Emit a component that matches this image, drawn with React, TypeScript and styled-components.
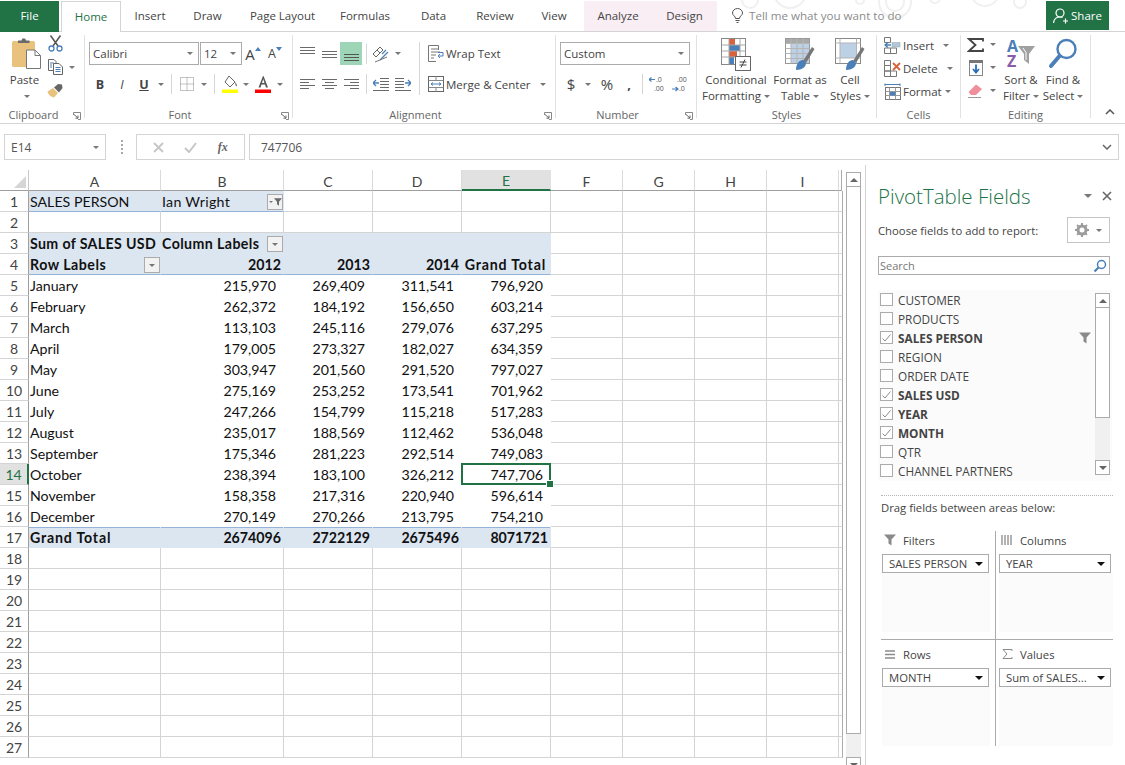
import React from 'react';
import styled, { createGlobalStyle } from 'styled-components';

const UI = `'Open Sans', 'Noto Sans', 'Liberation Sans', sans-serif`;
const SHEET = `Lato, 'Noto Sans', 'Liberation Sans', sans-serif`;
const GREEN = '#217346';
const BLUE = '#4a7fb8';

const GlobalStyle = createGlobalStyle`
  html, body {
    margin: 0;
    padding: 0;
    background: #fff;
    overflow: hidden;
  }
  * {
    box-sizing: border-box;
  }
`;

const Window = styled.div`
  width: 1125px;
  height: 765px;
  overflow: hidden;
  display: flex;
  flex-direction: column;
  font-family: ${UI};
  font-size: 11.5px;
  color: #444;
  background: #fff;
`;

/* Tabs */
const TabBar = styled.div`
  position: relative;
  isolation: isolate;
  height: 32px;
  flex: none;
  display: flex;
  align-items: stretch;
  padding-top: 1px;
  border-bottom: 1px solid #d4d4d4;
`;

const FileTab = styled.div`
  width: 59px;
  margin-right: 2px;
  margin-bottom: -1px;
  padding-bottom: 2px;
  background: ${GREEN};
  color: #fff;
  display: flex;
  align-items: center;
  justify-content: center;
`;

const Tab = styled.div<{ $w: number; $active?: boolean; $ctx?: boolean }>`
  width: ${(p) => p.$w}px;
  padding-bottom: 2px;
  display: flex;
  align-items: center;
  justify-content: center;
  white-space: nowrap;
  background: ${(p) => (p.$ctx ? '#f9eef4' : 'transparent')};
  color: ${(p) => (p.$active ? GREEN : '#444')};
  ${(p) =>
    p.$active &&
    `background: #fff; border: 1px solid #d4d4d4; border-bottom: 0; margin-bottom: -1px; position: relative; z-index: 1;`}
`;

const TellMe = styled.div`
  display: flex;
  align-items: center;
  gap: 6px;
  margin-left: 15px;
  width: 314px;
  padding-bottom: 2px;
  color: #8c8c8c;
  font-size: 11.6px;
  white-space: nowrap;
`;

const ShareButton = styled.div`
  width: 63px;
  margin-bottom: 1px;
  background: ${GREEN};
  color: #fff;
  display: flex;
  align-items: center;
  justify-content: center;
  gap: 3px;
`;

const Swirl = styled.svg`
  position: absolute;
  left: 730px;
  top: 0;
  z-index: -1;
  pointer-events: none;
`;

/* Ribbon */
const Ribbon = styled.div`
  height: 92px;
  flex: none;
  display: flex;
  padding-top: 3px;
  border-bottom: 1px solid #d4d4d4;
`;

const Group = styled.div<{ $w: number }>`
  width: ${(p) => p.$w}px;
  height: 83px;
  flex: none;
  display: flex;
  flex-direction: column;
  border-right: 1px solid #e1e1e1;
`;

const GroupBody = styled.div<{ $pl?: number; $pt?: number; $row?: boolean }>`
  height: 72px;
  padding-left: ${(p) => p.$pl ?? 0}px;
  padding-top: ${(p) => p.$pt ?? 0}px;
  display: flex;
  flex-direction: ${(p) => (p.$row ? 'row' : 'column')};
`;

const GroupLabel = styled.div<{ $launcher?: boolean }>`
  position: relative;
  height: 16px;
  margin-bottom: -5px;
  padding-right: ${(p) => (p.$launcher ? 17 : 0)}px;
  line-height: 16px;
  text-align: center;
  font-size: 11px;
  color: #666;
`;

const Launcher = styled.svg`
  position: absolute;
  right: 3px;
  top: 5px;
`;

const ToolRow = styled.div<{ $h?: number; $mt?: number }>`
  display: flex;
  align-items: center;
  height: ${(p) => p.$h ?? 22}px;
  margin-top: ${(p) => p.$mt ?? 0}px;
  white-space: nowrap;
`;

const Column = styled.div<{ $w?: number; $ml?: number }>`
  display: flex;
  flex-direction: column;
  flex: none;
  margin-left: ${(p) => p.$ml ?? 0}px;
  ${(p) => p.$w && `width: ${p.$w}px;`}
`;

const Btn = styled.div<{ $w: number; $bg?: string; $bold?: boolean; $size?: number; $italic?: boolean; $under?: boolean }>`
  width: ${(p) => p.$w}px;
  height: 100%;
  flex: none;
  display: flex;
  align-items: center;
  justify-content: center;
  background: ${(p) => p.$bg ?? 'transparent'};
  font-weight: ${(p) => (p.$bold ? 700 : 400)};
  font-style: ${(p) => (p.$italic ? 'italic' : 'normal')};
  text-decoration: ${(p) => (p.$under ? 'underline' : 'none')};
  font-size: ${(p) => p.$size ?? 12}px;
`;

const Caret = styled.span<{ $dark?: boolean; $size?: number; $ml?: number }>`
  display: inline-block;
  flex: none;
  width: 0;
  height: 0;
  margin-left: ${(p) => p.$ml ?? 0}px;
  border-left: ${(p) => p.$size ?? 3}px solid transparent;
  border-right: ${(p) => p.$size ?? 3}px solid transparent;
  border-top: ${(p) => p.$size ?? 3}px solid ${(p) => (p.$dark ? '#111' : '#777')};
`;

const VSep = styled.div<{ $w: number; $h?: number }>`
  width: ${(p) => p.$w}px;
  height: ${(p) => p.$h ?? 20}px;
  flex: none;
  position: relative;
  &::after {
    content: '';
    position: absolute;
    left: 50%;
    top: 0;
    bottom: 0;
    width: 1px;
    background: #d6d6d6;
  }
`;

const ComboBox = styled.div<{ $w: number; $mr?: number }>`
  width: ${(p) => p.$w}px;
  height: 23px;
  margin-right: ${(p) => p.$mr ?? 0}px;
  flex: none;
  border: 1px solid #ababab;
  background: #fff;
  display: flex;
  align-items: center;
  justify-content: space-between;
  padding: 0 5px 0 3px;
`;

const LargeButton = styled.div<{ $w: number }>`
  width: ${(p) => p.$w}px;
  flex: none;
  display: flex;
  flex-direction: column;
  align-items: center;
  line-height: 16px;
  white-space: nowrap;
`;

const LargeIcon = styled.div<{ $h?: number }>`
  height: ${(p) => p.$h ?? 36}px;
  display: flex;
  align-items: center;
  justify-content: center;
`;

const TextLine = styled.div`
  display: flex;
  align-items: center;
  gap: 3px;
  height: 16px;
`;

const ToolText = styled.span<{ $ml?: number; $mr?: number }>`
  margin-left: ${(p) => p.$ml ?? 3}px;
  margin-right: ${(p) => p.$mr ?? 0}px;
`;

const SortLetters = styled.div`
  display: flex;
  flex-direction: column;
  font-size: 16px;
  font-weight: 700;
  line-height: 15px;
`;

const SortLetter = styled.span<{ $c: string }>`
  color: ${(p) => p.$c};
`;

const Collapse = styled.div`
  flex: 1;
  display: flex;
  align-items: flex-end;
  justify-content: flex-end;
  padding: 0 10px 3px 0;
  height: 83px;
`;

/* Formula bar */
const FormulaBar = styled.div`
  height: 41px;
  flex: none;
  display: flex;
  align-items: center;
  padding: 5px 6px 0 4px;
  color: #555;
  font-size: 12px;
`;

const FormulaBox = styled.div<{ $w?: number; $ml?: number; $around?: boolean }>`
  ${(p) => (p.$w ? `width: ${p.$w}px; flex: none;` : 'flex: 1;')}
  margin-left: ${(p) => p.$ml ?? 0}px;
  height: 26px;
  border: 1px solid #d4d4d4;
  display: flex;
  align-items: center;
  justify-content: ${(p) => (p.$around ? 'space-around' : 'space-between')};
  padding: 0 6px;
  background: #fff;
`;

const Grip = styled.div`
  width: 3px;
  height: 14px;
  margin-left: 15px;
  margin-right: 12px;
  border-left: 2px dotted #a8a8a8;
`;

const FxMark = styled.span`
  font-family: 'Liberation Serif', serif;
  font-style: italic;
  font-weight: 700;
  color: #666;
`;

const FormulaValue = styled.span`
  margin-left: 5px;
`;

/* Sheet */
const Main = styled.div`
  flex: 1;
  min-height: 0;
  display: flex;
`;

const SheetArea = styled.div`
  width: 865px;
  flex: none;
  display: flex;
  padding-top: 5px;
  overflow: hidden;
`;

const Grid = styled.div`
  display: grid;
  width: 842px;
  height: 588px;
  grid-template-columns: 29px 132px 123px 89px 89px 89px 72px 72px 72px 72px 3px;
  grid-auto-rows: 21px;
  font-family: ${SHEET};
  font-size: 14.2px;
  color: #111;
`;

const Corner = styled.div`
  border-bottom: 1px solid #9f9f9f;
  border-right: 1px solid #c8c8c8;
  position: relative;
  &::after {
    content: '';
    position: absolute;
    right: 2px;
    bottom: 2px;
    border-style: solid;
    border-width: 0 0 12px 12px;
    border-color: transparent transparent #d6d6d6 transparent;
  }
`;

const ColHead = styled.div<{ $sel?: boolean; $end?: boolean }>`
  display: flex;
  align-items: center;
  justify-content: center;
  padding-top: 2px;
  color: ${(p) => (p.$sel ? GREEN : '#444')};
  background: ${(p) => (p.$sel ? '#e1e1e1' : '#fff')};
  font-size: 14px;
  border-right: 1px solid ${(p) => (p.$sel ? '#e1e1e1' : p.$end ? '#ababab' : '#dadada')};
  border-bottom: ${(p) => (p.$sel ? `2px solid ${GREEN}` : '1px solid #9f9f9f')};
`;

const RowHead = styled.div<{ $sel?: boolean }>`
  display: flex;
  align-items: center;
  justify-content: center;
  color: ${(p) => (p.$sel ? GREEN : '#444')};
  background: ${(p) => (p.$sel ? '#e1e1e1' : '#fff')};
  font-size: 14px;
  border-bottom: 1px solid #d4d4d4;
  border-right: ${(p) => (p.$sel ? `2px solid ${GREEN}` : '1px solid #9f9f9f')};
`;

const Cell = styled.div<{
  $shade?: boolean;
  $plain?: boolean;
  $right?: boolean;
  $bold?: boolean;
  $pr?: number;
  $track?: number;
  $line?: 'top' | 'bottom';
  $sel?: boolean;
  $end?: boolean;
}>`
  position: relative;
  display: flex;
  align-items: center;
  white-space: nowrap;
  padding: 0 ${(p) => p.$pr ?? 2}px 0 1px;
  justify-content: ${(p) => (p.$right ? 'flex-end' : 'flex-start')};
  font-weight: ${(p) => (p.$bold ? 700 : 400)};
  letter-spacing: ${(p) => p.$track ?? 0}px;
  background: ${(p) => (p.$shade ? '#dce6f1' : '#fff')};
  border-right: 1px solid
    ${(p) => (p.$end ? '#ababab' : p.$shade ? '#dce6f1' : p.$plain || p.$sel ? '#fff' : '#d4d4d4')};
  border-bottom: 1px solid
    ${(p) =>
      p.$line === 'bottom' ? '#95b3d7' : p.$shade ? '#dce6f1' : p.$plain ? '#fff' : '#d4d4d4'};
  ${(p) => p.$line === 'top' && 'box-shadow: inset 0 1px 0 #95b3d7;'}
  ${(p) =>
    p.$sel &&
    `&::after {
      content: '';
      position: absolute;
      left: -1px;
      top: -1px;
      right: -1px;
      bottom: -1px;
      border: 2px solid ${GREEN};
    }
    &::before {
      content: '';
      position: absolute;
      right: -4px;
      bottom: -4px;
      width: 6px;
      height: 6px;
      background: ${GREEN};
      border: 1px solid #fff;
      z-index: 1;
    }`}
`;

const FilterBtn = styled.div`
  position: absolute;
  right: 0;
  top: 3px;
  width: 16px;
  height: 16px;
  background: #f2f2f2;
  border: 1px solid #ababab;
  display: flex;
  align-items: center;
  justify-content: center;
  gap: 1px;
`;

const VScroll = styled.div`
  width: 23px;
  flex: none;
  padding: 2px 0 0 4px;
  display: flex;
  flex-direction: column;
`;

const ScrollBtn = styled.div`
  height: 15px;
  flex: none;
  width: 15px;
  border: 1px solid #ababab;
  background: #fff;
  display: flex;
  align-items: center;
  justify-content: center;
`;

const ScrollThumb = styled.div<{ $h: number }>`
  height: ${(p) => p.$h}px;
  width: 15px;
  flex: none;
  border: 1px solid #ababab;
  border-top: 0;
  background: #fff;
`;

const ScrollTrack = styled.div<{ $h: number }>`
  height: ${(p) => p.$h}px;
  width: 15px;
  flex: none;
  background: #f0f0f0;
`;

const UpArrow = styled.span`
  width: 0;
  height: 0;
  border-left: 4px solid transparent;
  border-right: 4px solid transparent;
  border-bottom: 4px solid #666;
`;

const DownArrow = styled.span`
  width: 0;
  height: 0;
  border-left: 4px solid transparent;
  border-right: 4px solid transparent;
  border-top: 4px solid #666;
`;

/* PivotTable pane */
const Pane = styled.div`
  flex: 0 0 260px;
  min-width: 0;
  border-left: 1px solid #d4d4d4;
  padding: 15px 15px 0 12px;
  display: flex;
  flex-direction: column;
  font-size: 11.3px;
  color: #444;
`;

const PaneHead = styled.div`
  display: flex;
  align-items: center;
  justify-content: space-between;
  height: 32px;
`;

const PaneTitle = styled.div`
  font-size: 20.5px;
  font-weight: 300;
  color: ${GREEN};
  white-space: nowrap;
`;

const PaneActions = styled.div`
  display: flex;
  align-items: center;
  gap: 10px;
  margin-right: -2px;
`;

const ChooseRow = styled.div`
  display: flex;
  align-items: center;
  justify-content: space-between;
  height: 26px;
  margin-top: 5px;
`;

const GearBox = styled.div`
  width: 43px;
  height: 26px;
  border: 1px solid #c6c6c6;
  display: flex;
  align-items: center;
  justify-content: center;
  gap: 7px;
`;

const SearchBox = styled.div`
  height: 19px;
  margin-top: 13px;
  border: 1px solid #ababab;
  display: flex;
  align-items: center;
  justify-content: space-between;
  padding: 0 2px 0 1px;
  color: #777;
  font-size: 11px;
`;

const FieldList = styled.div`
  display: flex;
  height: 191px;
  margin-top: 15px;
  margin-right: -2px;
  background: #fbfbfb;
`;

const Fields = styled.div`
  flex: 1;
  padding: 0 4px 0 2px;
  font-size: 11.8px;
`;

const FieldRow = styled.div<{ $on?: boolean }>`
  height: 19px;
  display: flex;
  align-items: center;
  gap: 5px;
  font-weight: ${(p) => (p.$on ? 700 : 400)};
  white-space: nowrap;
`;

const CheckBox = styled.span`
  width: 13px;
  height: 13px;
  flex: none;
  background: #fff;
  border: 1px solid #ababab;
  display: flex;
  align-items: center;
  justify-content: center;
`;

const FieldFilter = styled.span`
  margin-left: auto;
  display: flex;
`;

const ListScroll = styled.div`
  width: 15px;
  flex: none;
  margin-right: 2px;
  padding-top: 3px;
  display: flex;
  flex-direction: column;
`;

const DottedRule = styled.div`
  margin: 14px -3px 0 3px;
  border-top: 1px dotted #b5b5b5;
`;

const DragHint = styled.div`
  margin: 3px 0 0 3px;
  height: 17px;
  line-height: 17px;
`;

const Areas = styled.div`
  display: grid;
  grid-template-columns: 115px 117px;
  grid-template-rows: 109px 106px;
  margin: 15px 0 0 3px;
`;

const Area = styled.div<{ $left?: boolean; $top?: boolean }>`
  padding: ${(p) => (p.$top ? 0 : 5)}px 0 ${(p) => (p.$top ? 7 : 0)}px ${(p) => (p.$left ? 1 : 3)}px;
  ${(p) => p.$left && 'border-right: 1px solid #ababab;'}
  ${(p) => p.$top && 'border-bottom: 1px solid #ababab;'}
  display: flex;
  flex-direction: column;
`;

const AreaHead = styled.div`
  height: 18px;
  display: flex;
  align-items: center;
  gap: 7px;
  padding-left: 2px;
`;

const AreaGlyph = styled.span`
  width: 12px;
  display: flex;
  justify-content: center;
  flex: none;
`;

const AreaBox = styled.div<{ $w: number }>`
  flex: none;
  width: ${(p) => p.$w}px;
  height: 19px;
  margin-top: 5px;
  border: 1px solid #ababab;
  background: #fff;
  display: flex;
  align-items: center;
  justify-content: space-between;
  padding: 0 5px 0 6px;
  white-space: nowrap;
`;

const AreaFill = styled.div<{ $w: number }>`
  flex: 1;
  width: ${(p) => p.$w}px;
  background: #fbfbfb;
`;

/* Icons */
const LauncherIcon = () => (
  <Launcher width="8" height="8" viewBox="0 0 8 8">
    <path d="M.5 3V.5H7.5V7.5H5" fill="none" stroke="#888" />
    <path d="M1 2.5L5 6M5 3.5V6.2H2.5" fill="none" stroke="#666" />
  </Launcher>
);

const PasteIcon = () => (
  <svg width="30" height="33" viewBox="0 0 30 33">
    <rect x="0" y="4" width="23" height="26" rx="1.5" fill="#e9c37e" />
    <path d="M6 6V3.5H9.5C10 .5 13.5 .5 14 3.5H17.5V6Z" fill="#6a6a6a" />
    <path d="M14.5 13H23L28.5 18.5V31.5H14.5Z" fill="#fff" stroke="#777" />
    <path d="M23 13V18.5H28.5" fill="none" stroke="#777" />
  </svg>
);

const ScissorsIcon = () => (
  <svg width="15" height="17" viewBox="0 0 15 17">
    <path d="M2.5 .5L10 11M12.5 .5L5 11" fill="none" stroke="#555" strokeWidth="1.5" />
    <circle cx="3.5" cy="13.5" r="2.5" fill="none" stroke={BLUE} strokeWidth="1.3" />
    <circle cx="11.5" cy="13.5" r="2.5" fill="none" stroke={BLUE} strokeWidth="1.3" />
  </svg>
);

const CopyIcon = () => (
  <svg width="15" height="16" viewBox="0 0 15 16">
    <path d="M.5 .5H6L8 2.5V11.5H.5Z" fill="#fff" stroke="#666" />
    <path d="M5.5 4.5H11L14.5 8V15.5H5.5Z" fill="#fff" stroke="#666" />
    <path d="M2 4H6M2 6H4M2 8H4M7.5 8.5H12.5M7.5 10.5H12.5M7.5 12.5H12.5" stroke={BLUE} />
  </svg>
);

const BrushIcon = () => (
  <svg width="17" height="15" viewBox="0 0 17 15">
    <path d="M6 5L11 10L7 14.5C4 14 1 11.5 .5 8.5Z" fill="#e9c37e" />
    <path d="M7 4.5L11 1L15 1.5L15.5 5L12 9.5Z" fill="#666" />
  </svg>
);

const GrowA = ({ up }: { up?: boolean }) => (
  <Btn $w={22} $size={up ? 15 : 12.5}>
    A
    <svg width="6" height="4" viewBox="0 0 6 4" style={{ marginBottom: 10 }}>
      <path d={up ? 'M0 4L3 0L6 4Z' : 'M0 0L3 4L6 0Z'} fill={BLUE} />
    </svg>
  </Btn>
);

const BordersIcon = () => (
  <svg width="14" height="14" viewBox="0 0 14 14">
    <path d="M.5 .5H13.5V13.5H.5ZM.5 7H13.5M7 .5V13.5" fill="none" stroke="#888" strokeDasharray="1 1" />
  </svg>
);

const FillIcon = () => (
  <svg width="16" height="18" viewBox="0 0 16 18">
    <path d="M7 1L13 7L8 12L3 7Z" fill="#fff" stroke="#666" />
    <path d="M13 7C15 9 15.5 11 14.5 11.5C13.5 11 13 9 13 7Z" fill="#777" />
    <rect x="0" y="14.5" width="16" height="3.5" fill="#ffff00" />
  </svg>
);

const FontColorIcon = () => (
  <svg width="16" height="18" viewBox="0 0 16 18">
    <path d="M8 1H8.5L13 12.5H11L10 9.5H6.5L5.5 12.5H3.5ZM7 8H9.5L8.2 4Z" fill="#555" />
    <rect x="0" y="14.5" width="16" height="3.5" fill="#ff0000" />
  </svg>
);

const Lines = ({ rows, w = 15 }: { rows: number[]; w?: number }) => (
  <svg width={w} height="16" viewBox={`0 0 ${w} 16`}>
    {rows.map((y) => (
      <path key={y} d={`M0 ${y + 0.5}H${w}`} stroke="#6a6a6a" />
    ))}
  </svg>
);

const AlignLeft = () => (
  <svg width="15" height="11" viewBox="0 0 15 11">
    <path d="M0 .5H15M0 3.5H9M0 6.5H15M0 9.5H9" stroke="#6a6a6a" />
  </svg>
);

const AlignCenter = () => (
  <svg width="15" height="11" viewBox="0 0 15 11">
    <path d="M0 .5H15M3 3.5H12M0 6.5H15M3 9.5H12" stroke="#6a6a6a" />
  </svg>
);

const AlignRight = () => (
  <svg width="15" height="11" viewBox="0 0 15 11">
    <path d="M0 .5H15M6 3.5H15M0 6.5H15M6 9.5H15" stroke="#6a6a6a" />
  </svg>
);

const OrientationIcon = () => (
  <svg width="18" height="18" viewBox="0 0 18 18">
    <path d="M1 9L8 2L11 5L4 12ZM5 5L8 8" fill="none" stroke="#666" />
    <path d="M10 9L14 5M8 15L16 7" stroke={BLUE} strokeWidth="1.2" />
    <path d="M3 17L15 12" stroke="#777" />
  </svg>
);

const IndentIcon = ({ flip }: { flip?: boolean }) => (
  <svg width="16" height="14" viewBox="0 0 16 14" style={{ transform: flip ? 'scaleX(-1)' : undefined }}>
    <path d="M7 1.5H16M7 4.5H16M7 7.5H16M7 10.5H16M0 13.5H16" stroke="#6a6a6a" />
    <path d="M0 6H6M3 3L0 6L3 9" fill="none" stroke={BLUE} strokeWidth="1.3" />
  </svg>
);

const WrapIcon = () => (
  <svg width="16" height="17" viewBox="0 0 16 17">
    <path d="M.5 .5H10.5V5M.5 .5V16.5H8" fill="none" stroke="#777" />
    <path d="M3 4H10M3 7H12M3 10H8M3 13H6" stroke="#777" />
    <path d="M10 7.5H15V11H10M12 9L10 11L12 13" fill="none" stroke={BLUE} />
  </svg>
);

const MergeIcon = () => (
  <svg width="16" height="16" viewBox="0 0 16 16">
    <rect x=".5" y=".5" width="15" height="15" fill="#fff" stroke="#666" />
    <path d="M.5 4.5H15.5M.5 11.5H15.5M8 .5V4M8 12V15.5" stroke="#888" />
    <path d="M3 8H13M3 8L5 6.5M3 8L5 9.5M13 8L11 6.5M13 8L11 9.5" fill="none" stroke={BLUE} />
  </svg>
);

const DecimalIcon = ({ more }: { more?: boolean }) => (
  <svg width="17" height="20" viewBox="0 0 17 20">
    <text x={more ? 7 : 5} y="7.6" fontSize="7" fontFamily={UI} fill="#555">
      {more ? '.0' : '.00'}
    </text>
    <text x={more ? 5 : 7} y="17.2" fontSize="7" fontFamily={UI} fill="#555">
      {more ? '.00' : '.0'}
    </text>
    <path
      d={more ? 'M0 5.500H6M2.5 3.500L0 5.500L2.5 7.500' : 'M0 15H6M3.5 13L6 15L3.5 17'}
      fill="none"
      stroke={BLUE}
      strokeWidth="1.2"
    />
  </svg>
);

const ConditionalIcon = () => (
  <svg width="30" height="33" viewBox="0 0 30 33">
    <rect x=".5" y=".5" width="24" height="26" fill="#fff" stroke="#888" />
    <rect x="8" y="1" width="6" height="6" fill="#d9623a" />
    <rect x="8" y="7" width="11" height="6" fill="#4a7fb8" />
    <rect x="8" y="13" width="8" height="6" fill="#d9623a" />
    <rect x="8" y="19" width="5" height="7" fill="#4a7fb8" />
    <path d="M.5 7H24.5M.5 13H24.5M.5 19H24.5M8 .5V26.5M19 .5V26.5" stroke="#a8a8a8" />
    <rect x="14.5" y="18.5" width="15" height="14" fill="#fff" stroke="#666" />
    <path d="M18.5 24H25.5M18.5 27H25.5M24 21.5L20 29.5" fill="none" stroke="#444" />
  </svg>
);

const FormatTableIcon = () => (
  <svg width="30" height="33" viewBox="0 0 30 33">
    <rect x=".5" y=".5" width="24" height="25" fill="#fff" stroke="#999" />
    <rect x="1" y="1" width="23" height="4" fill="#a8a8a8" />
    <rect x="6" y="6" width="18" height="19" fill="#bcd0e6" />
    <path d="M.5 5.5H24.5M.5 10.5H24.5M.5 15.5H24.5M.5 20.5H24.5M6 .5V25.5M12 .5V25.5M18 .5V25.5" stroke="#b5b5b5" />
    <path d="M18 23L27 9L29.5 11L21 25Z" fill="#777" />
    <path d="M11 32C11 26 14 22 18 22L21 25C21 29 17 32 11 32Z" fill={BLUE} />
  </svg>
);

const CellStylesIcon = () => (
  <svg width="30" height="33" viewBox="0 0 30 33">
    <rect x=".5" y=".5" width="25" height="25" fill="#fff" stroke="#888" />
    <rect x="5" y="5" width="17" height="15" fill="#bcd0e6" />
    <path d="M5 .5V25.5M.5 5H25.5M.5 20H25.5M21.5 .5V25.5" stroke="#b5b5b5" />
    <path d="M18 23L27 9L29.5 11L21 25Z" fill="#777" />
    <path d="M11 32C11 26 14 22 18 22L21 25C21 29 17 32 11 32Z" fill={BLUE} />
  </svg>
);

const InsertIcon = () => (
  <svg width="17" height="17" viewBox="0 0 17 17">
    <path d="M.5 .5H6.5V5.5H.5ZM.5 11H6.5V16.5H.5ZM6.5 11H12.5V16.5H6.5Z" fill="#fff" stroke="#777" />
    <rect x="8" y="5.5" width="8" height="4.5" fill="#b5c6da" stroke="#8aa" strokeWidth=".5" />
    <path d="M1 8H7M4 5.5L1 8L4 10.5" fill="none" stroke={BLUE} strokeWidth="1.4" />
  </svg>
);

const DeleteIcon = () => (
  <svg width="17" height="17" viewBox="0 0 17 17">
    <path d="M.5 .5H6.5V5.5H.5ZM.5 5.5H6.5V11H.5ZM.5 11H6.5V16.5H.5ZM6.5 11H12.5V16.5H6.5Z" fill="#fff" stroke="#777" />
    <path d="M9 3L16 10M16 3L9 10" stroke="#d9623a" strokeWidth="1.8" />
  </svg>
);

const FormatIcon = () => (
  <svg width="17" height="17" viewBox="0 0 17 17">
    <rect x="1.5" y="4.5" width="15" height="12" fill="#fff" stroke="#777" />
    <path d="M5.5 4.5V16.5M11.5 4.5V16.5M1.5 8.5H16.5M1.5 12.5H16.5" stroke="#999" />
    <rect x="6" y="9" width="5.5" height="3.5" fill={BLUE} />
    <path d="M1 1.5H16M1 .5V3M16 .5V3" fill="none" stroke={BLUE} />
  </svg>
);

const SigmaIcon = () => (
  <svg width="17" height="14" viewBox="0 0 17 14">
    <path d="M16 3.5V1H2L8.5 7L2 13H16V10.5" fill="none" stroke="#444" strokeWidth="1.8" />
  </svg>
);

const FillDownIcon = () => (
  <svg width="14" height="16" viewBox="0 0 14 16">
    <rect x=".5" y=".5" width="13" height="15" fill="#fff" stroke="#888" />
    <rect x="0" y="0" width="14" height="3" fill="#777" />
    <path d="M7 4.5V12M4 9L7 12.5L10 9" fill="none" stroke="#2a6ebb" strokeWidth="1.8" />
  </svg>
);

const EraserIcon = () => (
  <svg width="15" height="14" viewBox="0 0 15 14">
    <path d="M.5 8L8 .5L14 5L8 11H3Z" fill="#ef8f9c" />
    <path d="M0 13.5H13" stroke="#999" />
  </svg>
);

const FunnelBig = () => (
  <svg width="17" height="19" viewBox="0 0 17 19">
    <path d="M0 1H17L11 9V19L6 15V9Z" fill="#a0a0a0" />
    <path d="M5 3L8 7.5V15" fill="none" stroke="#fff" />
  </svg>
);

const FindIcon = () => (
  <svg width="30" height="32" viewBox="0 0 30 32">
    <circle cx="18.5" cy="11" r="9" fill="#fff" stroke={BLUE} strokeWidth="2.4" />
    <path d="M11.5 18L3 28" stroke={BLUE} strokeWidth="4" strokeLinecap="round" />
  </svg>
);

const FilterFunnel = ({ c = '#8a8a8a', s = 12 }: { c?: string; s?: number }) => (
  <svg width={s} height={s} viewBox="0 0 12 12">
    <path d="M0 .5H12L7.5 5.5V11.5L4.5 9.5V5.5Z" fill={c} />
  </svg>
);

const GearIcon = () => (
  <svg width="14" height="14" viewBox="0 0 14 14">
    <circle cx="7" cy="7" r="4" fill="none" stroke="#9c9c9c" strokeWidth="3" />
    <path d="M7 0V14M0 7H14M2 2L12 12M12 2L2 12" stroke="#9c9c9c" strokeWidth="2" strokeDasharray="2 10" />
  </svg>
);

const Tick = () => (
  <svg width="9" height="8" viewBox="0 0 9 8">
    <path d="M.5 4.5L3 7L8.5 .5" fill="none" stroke="#8a8a8a" />
  </svg>
);

const tabs: { label: string; w: number; ctx?: boolean }[] = [
  { label: 'Insert', w: 58 },
  { label: 'Draw', w: 57 },
  { label: 'Page Layout', w: 93 },
  { label: 'Formulas', w: 72 },
  { label: 'Data', w: 65 },
  { label: 'Review', w: 58 },
  { label: 'View', w: 60 },
  { label: 'Analyze', w: 68, ctx: true },
  { label: 'Design', w: 65, ctx: true },
];

const colLetters = ['A', 'B', 'C', 'D', 'E', 'F', 'G', 'H', 'I'];

const months: [string, string, string, string, string][] = [
  ['January', '215,970', '269,409', '311,541', '796,920'],
  ['February', '262,372', '184,192', '156,650', '603,214'],
  ['March', '113,103', '245,116', '279,076', '637,295'],
  ['April', '179,005', '273,327', '182,027', '634,359'],
  ['May', '303,947', '201,560', '291,520', '797,027'],
  ['June', '275,169', '253,252', '173,541', '701,962'],
  ['July', '247,266', '154,799', '115,218', '517,283'],
  ['August', '235,017', '188,569', '112,462', '536,048'],
  ['September', '175,346', '281,223', '292,514', '749,083'],
  ['October', '238,394', '183,100', '326,212', '747,706'],
  ['November', '158,358', '217,316', '220,940', '596,614'],
  ['December', '270,149', '270,266', '213,795', '754,210'],
];

const fields: { name: string; on?: boolean; filter?: boolean }[] = [
  { name: 'CUSTOMER' },
  { name: 'PRODUCTS' },
  { name: 'SALES PERSON', on: true, filter: true },
  { name: 'REGION' },
  { name: 'ORDER DATE' },
  { name: 'SALES USD', on: true },
  { name: 'YEAR', on: true },
  { name: 'MONTH', on: true },
  { name: 'QTR' },
  { name: 'CHANNEL PARTNERS' },
];

const EmptyCells = ({ from }: { from: number }) => (
  <>
    {Array.from({ length: 9 - from }, (_, i) => (
      <Cell key={i} />
    ))}
    <Cell $end />
  </>
);

const TitleTabs = () => (
  <TabBar>
    <Swirl width="310" height="31" viewBox="0 0 310 31">
      <g fill="none" stroke="#f0f0f0" strokeWidth="2">
        <circle cx="20" cy="0" r="8" />
        <circle cx="60" cy="-8" r="16" />
        <circle cx="130" cy="0" r="4" />
        <circle cx="165" cy="2" r="16" />
        <circle cx="165" cy="2" r="9" />
        <circle cx="205" cy="-2" r="5" />
        <circle cx="255" cy="-8" r="14" />
        <circle cx="290" cy="2" r="6" />
      </g>
    </Swirl>
    <FileTab>File</FileTab>
    <Tab $w={60} $active>
      Home
    </Tab>
    {tabs.map((t) => (
      <Tab key={t.label} $w={t.w} $ctx={t.ctx}>
        {t.label}
      </Tab>
    ))}
    <TellMe>
      <svg width="11" height="15" viewBox="0 0 11 15">
        <path
          d="M3.5 10.5C3.5 8 .5 7.5 .5 5C.5 2.5 2.7 .5 5.5 .5C8.3 .5 10.5 2.5 10.5 5C10.5 7.5 7.5 8 7.5 10.5ZM3.5 12.5H7.5M4.5 14.5H6.5"
          fill="none"
          stroke="#555"
        />
      </svg>
      Tell me what you want to do
    </TellMe>
    <ShareButton>
      <svg width="15" height="16" viewBox="0 0 15 16">
        <circle cx="7" cy="5" r="4" fill="none" stroke="#fff" strokeWidth="1.2" />
        <path d="M.5 15C1 11 3.5 9 7 9C8 9 9 9.2 9.5 9.5M10 13H15M12.5 10.5V15.5" fill="none" stroke="#fff" strokeWidth="1.2" />
      </svg>
      Share
    </ShareButton>
  </TabBar>
);

const RibbonBar = () => (
  <Ribbon>
    <Group $w={85}>
      <GroupBody $row $pl={10}>
        <LargeButton $w={34}>
          <LargeIcon $h={37}>
            <PasteIcon />
          </LargeIcon>
          <ToolText $ml={-5}>Paste</ToolText>
          <TextLine>
            <Caret />
          </TextLine>
        </LargeButton>
        <Column>
          <ToolRow $h={17}>
            <Btn $w={22}>
              <ScissorsIcon />
            </Btn>
          </ToolRow>
          <ToolRow $h={18} $mt={6}>
            <Btn $w={22}>
              <CopyIcon />
            </Btn>
            <Caret $ml={3} />
          </ToolRow>
          <ToolRow $h={16} $mt={6}>
            <Btn $w={22}>
              <BrushIcon />
            </Btn>
          </ToolRow>
        </Column>
      </GroupBody>
      <GroupLabel $launcher>
        Clipboard
        <LauncherIcon />
      </GroupLabel>
    </Group>

    <Group $w={208}>
      <GroupBody $pl={4} $pt={7}>
        <ToolRow $h={23}>
          <ComboBox $w={110} $mr={1}>
            Calibri
            <Caret />
          </ComboBox>
          <ComboBox $w={42}>
            12
            <Caret />
          </ComboBox>
          <GrowA up />
          <GrowA />
        </ToolRow>
        <ToolRow $mt={8}>
          <Btn $w={22} $bold $size={12.5}>
            B
          </Btn>
          <Btn $w={22} $size={12.5} $italic>
            I
          </Btn>
          <Btn $w={22} $bold $size={12.5} $under>
            U
          </Btn>
          <Btn $w={12}>
            <Caret />
          </Btn>
          <VSep $w={8} />
          <Btn $w={24}>
            <BordersIcon />
          </Btn>
          <Btn $w={10}>
            <Caret />
          </Btn>
          <VSep $w={10} />
          <Btn $w={22}>
            <FillIcon />
          </Btn>
          <Btn $w={10}>
            <Caret />
          </Btn>
          <Btn $w={24}>
            <FontColorIcon />
          </Btn>
          <Btn $w={10}>
            <Caret />
          </Btn>
        </ToolRow>
      </GroupBody>
      <GroupLabel $launcher>
        Font
        <LauncherIcon />
      </GroupLabel>
    </Group>

    <Group $w={263}>
      <GroupBody $row $pl={3} $pt={7}>
        <Column>
          <ToolRow $h={23}>
            <Btn $w={22}>
              <Lines rows={[1, 4, 7]} />
            </Btn>
            <Btn $w={22}>
              <Lines rows={[5, 8, 11]} />
            </Btn>
            <Btn $w={22} $bg="#9fd5b7">
              <svg width="15" height="15" viewBox="0 0 15 15">
                <path d="M0 8.5H15M0 11.5H15M0 14.5H15" stroke="#555" />
              </svg>
            </Btn>
            <VSep $w={8} />
            <Btn $w={22}>
              <OrientationIcon />
            </Btn>
            <Btn $w={12}>
              <Caret />
            </Btn>
          </ToolRow>
          <ToolRow $mt={8}>
            <Btn $w={22}>
              <AlignLeft />
            </Btn>
            <Btn $w={22}>
              <AlignCenter />
            </Btn>
            <Btn $w={22}>
              <AlignRight />
            </Btn>
            <VSep $w={8} />
            <Btn $w={22}>
              <IndentIcon />
            </Btn>
            <Btn $w={22}>
              <IndentIcon flip />
            </Btn>
          </ToolRow>
        </Column>
        <VSep $w={10} $h={53} />
        <Column $ml={4}>
          <ToolRow $h={23}>
            <WrapIcon />
            <ToolText $ml={2}>Wrap Text</ToolText>
          </ToolRow>
          <ToolRow $mt={8}>
            <MergeIcon />
            <ToolText $ml={2} $mr={9}>
              Merge &amp; Center
            </ToolText>
            <Caret />
          </ToolRow>
        </Column>
      </GroupBody>
      <GroupLabel $launcher>
        Alignment
        <LauncherIcon />
      </GroupLabel>
    </Group>

    <Group $w={141}>
      <GroupBody $pl={4} $pt={7}>
        <ToolRow $h={23}>
          <ComboBox $w={130}>
            Custom
            <Caret />
          </ComboBox>
        </ToolRow>
        <ToolRow $mt={8}>
          <Btn $w={22} $size={15}>
            $
          </Btn>
          <Btn $w={12}>
            <Caret />
          </Btn>
          <Btn $w={26} $size={15}>
            %
          </Btn>
          <Btn $w={18} $bold $size={13}>
            ,
          </Btn>
          <VSep $w={8} />
          <Btn $w={22}>
            <DecimalIcon more />
          </Btn>
          <Btn $w={24}>
            <DecimalIcon />
          </Btn>
        </ToolRow>
      </GroupBody>
      <GroupLabel $launcher>
        Number
        <LauncherIcon />
      </GroupLabel>
    </Group>

    <Group $w={180}>
      <GroupBody $row $pt={1}>
        <LargeButton $w={78}>
          <LargeIcon>
            <ConditionalIcon />
          </LargeIcon>
          <div>Conditional</div>
          <TextLine>
            Formatting
            <Caret />
          </TextLine>
        </LargeButton>
        <LargeButton $w={50}>
          <LargeIcon>
            <FormatTableIcon />
          </LargeIcon>
          <div>Format as</div>
          <TextLine>
            Table
            <Caret />
          </TextLine>
        </LargeButton>
        <LargeButton $w={50}>
          <LargeIcon>
            <CellStylesIcon />
          </LargeIcon>
          <div>Cell</div>
          <TextLine>
            Styles
            <Caret />
          </TextLine>
        </LargeButton>
      </GroupBody>
      <GroupLabel>Styles</GroupLabel>
    </Group>

    <Group $w={84}>
      <GroupBody $pl={7}>
        <ToolRow $h={23} $mt={-1}>
          <InsertIcon />
          <ToolText $ml={2} $mr={9}>
            Insert
          </ToolText>
          <Caret />
        </ToolRow>
        <ToolRow $h={23}>
          <DeleteIcon />
          <ToolText $ml={2} $mr={9}>
            Delete
          </ToolText>
          <Caret />
        </ToolRow>
        <ToolRow $h={23}>
          <FormatIcon />
          <ToolText $ml={2} $mr={3}>
            Format
          </ToolText>
          <Caret />
        </ToolRow>
      </GroupBody>
      <GroupLabel>Cells</GroupLabel>
    </Group>

    <Group $w={130}>
      <GroupBody $row $pl={6} $pt={1}>
        <Column $w={33}>
          <ToolRow $h={23} $mt={-3}>
            <SigmaIcon />
            <Caret $ml={6} />
          </ToolRow>
          <ToolRow $h={23}>
            <Btn $w={17}>
              <FillDownIcon />
            </Btn>
            <Caret $ml={6} />
          </ToolRow>
          <ToolRow $h={23}>
            <Btn $w={17}>
              <EraserIcon />
            </Btn>
            <Caret $ml={6} />
          </ToolRow>
        </Column>
        <LargeButton $w={42}>
          <LargeIcon>
            <SortLetters>
              <SortLetter $c={BLUE}>A</SortLetter>
              <SortLetter $c="#8a5ba8">Z</SortLetter>
            </SortLetters>
            <FunnelBig />
          </LargeIcon>
          <div>Sort &amp;</div>
          <TextLine>
            Filter
            <Caret />
          </TextLine>
        </LargeButton>
        <LargeButton $w={42}>
          <LargeIcon>
            <FindIcon />
          </LargeIcon>
          <div>Find &amp;</div>
          <TextLine>
            Select
            <Caret />
          </TextLine>
        </LargeButton>
      </GroupBody>
      <GroupLabel>Editing</GroupLabel>
    </Group>

    <Collapse>
      <svg width="10" height="6" viewBox="0 0 10 6">
        <path d="M1 5L5 1L9 5" fill="none" stroke="#555" strokeWidth="1.5" />
      </svg>
    </Collapse>
  </Ribbon>
);

const Formula = () => (
  <FormulaBar>
    <FormulaBox $w={102}>
      E14
      <Caret />
    </FormulaBox>
    <Grip />
    <FormulaBox $w={109} $around>
      <svg width="11" height="11" viewBox="0 0 11 11">
        <path d="M1 1L10 10M10 1L1 10" stroke="#c6c6c6" strokeWidth="1.8" />
      </svg>
      <svg width="13" height="11" viewBox="0 0 13 11">
        <path d="M1 6L5 10L12 1" fill="none" stroke="#c6c6c6" strokeWidth="2" />
      </svg>
      <FxMark>fx</FxMark>
    </FormulaBox>
    <FormulaBox $ml={4}>
      <FormulaValue>747706</FormulaValue>
      <svg width="10" height="6" viewBox="0 0 10 6">
        <path d="M1 1L5 5L9 1" fill="none" stroke="#666" strokeWidth="1.5" />
      </svg>
    </FormulaBox>
  </FormulaBar>
);

const Sheet = () => (
  <SheetArea>
    <Grid>
      <Corner />
      {colLetters.map((c) => (
        <ColHead key={c} $sel={c === 'E'}>
          {c}
        </ColHead>
      ))}
      <ColHead $end />

      <RowHead>1</RowHead>
      <Cell $shade $line="bottom">
        SALES PERSON
      </Cell>
      <Cell $shade $line="bottom" $track={0.3}>
        Ian Wright
        <FilterBtn>
          <Caret $size={2} />
          <FilterFunnel c="#6a6a6a" s={8} />
        </FilterBtn>
      </Cell>
      <EmptyCells from={2} />

      <RowHead>2</RowHead>
      <EmptyCells from={0} />

      <RowHead>3</RowHead>
      <Cell $shade $bold $track={0.35}>
        Sum of SALES USD
      </Cell>
      <Cell $shade $bold $track={0.4}>
        Column Labels
        <FilterBtn>
          <Caret />
        </FilterBtn>
      </Cell>
      <Cell $shade />
      <Cell $shade />
      <Cell $shade />
      <EmptyCells from={5} />

      <RowHead>4</RowHead>
      <Cell $shade $bold $line="bottom" $track={0.5}>
        Row Labels
        <FilterBtn>
          <Caret />
        </FilterBtn>
      </Cell>
      {['2012', '2013', '2014'].map((h) => (
        <Cell key={h} $shade $bold $right $line="bottom">
          {h}
        </Cell>
      ))}
      <Cell $shade $bold $right $line="bottom" $pr={4} $track={0.8}>
        Grand Total
      </Cell>
      <EmptyCells from={5} />

      {months.map((m, i) => {
        const rowNo = i + 5;
        return (
          <React.Fragment key={m[0]}>
            <RowHead $sel={rowNo === 14}>{rowNo}</RowHead>
            <Cell $plain>{m[0]}</Cell>
            {m.slice(1, 4).map((v) => (
              <Cell key={v} $plain $right $pr={7}>
                {v}
              </Cell>
            ))}
            <Cell $plain $right $pr={7} $sel={rowNo === 14}>
              {m[4]}
            </Cell>
            <EmptyCells from={5} />
          </React.Fragment>
        );
      })}

      <RowHead>17</RowHead>
      <Cell $shade $bold $line="top" $track={0.8}>
        Grand Total
      </Cell>
      {['2674096', '2722129', '2675496', '8071721'].map((v) => (
        <Cell key={v} $shade $bold $right $line="top">
          {v}
        </Cell>
      ))}
      <EmptyCells from={5} />

      {Array.from({ length: 10 }, (_, i) => (
        <React.Fragment key={i}>
          <RowHead>{i + 18}</RowHead>
          <EmptyCells from={0} />
        </React.Fragment>
      ))}
    </Grid>
    <VScroll>
      <ScrollBtn>
        <UpArrow />
      </ScrollBtn>
      <ScrollThumb $h={547} />
      <ScrollTrack $h={23} />
      <ScrollBtn>
        <DownArrow />
      </ScrollBtn>
    </VScroll>
  </SheetArea>
);

const AreaCell = ({
  glyph,
  label,
  value,
  left,
  top,
}: {
  glyph: React.ReactNode;
  label: string;
  value: string;
  left?: boolean;
  top?: boolean;
}) => (
  <Area $left={left} $top={top}>
    <AreaHead>
      <AreaGlyph>{glyph}</AreaGlyph>
      {label}
    </AreaHead>
    <AreaBox $w={left ? 107 : 112}>
      {value}
      <Caret $dark $size={4} />
    </AreaBox>
    <AreaFill $w={left ? 108 : 114} />
  </Area>
);

const FieldsPane = () => (
  <Pane>
    <PaneHead>
      <PaneTitle>PivotTable Fields</PaneTitle>
      <PaneActions>
        <Caret $size={4} />
        <svg width="10" height="10" viewBox="0 0 10 10">
          <path d="M1 1L9 9M9 1L1 9" stroke="#666" strokeWidth="1.6" />
        </svg>
      </PaneActions>
    </PaneHead>
    <ChooseRow>
      Choose fields to add to report:
      <GearBox>
        <GearIcon />
        <Caret />
      </GearBox>
    </ChooseRow>
    <SearchBox>
      Search
      <svg width="14" height="14" viewBox="0 0 14 14">
        <circle cx="8.5" cy="5.5" r="4" fill="none" stroke={BLUE} strokeWidth="1.5" />
        <path d="M5.5 8.5L1.5 12.5" stroke={BLUE} strokeWidth="2.2" />
      </svg>
    </SearchBox>
    <FieldList>
      <Fields>
        {fields.map((f) => (
          <FieldRow key={f.name} $on={f.on}>
            <CheckBox>{f.on && <Tick />}</CheckBox>
            {f.name}
            {f.filter && (
              <FieldFilter>
                <FilterFunnel />
              </FieldFilter>
            )}
          </FieldRow>
        ))}
      </Fields>
      <ListScroll>
        <ScrollBtn>
          <UpArrow />
        </ScrollBtn>
        <ScrollThumb $h={110} />
        <ScrollTrack $h={42} />
        <ScrollBtn>
          <DownArrow />
        </ScrollBtn>
      </ListScroll>
    </FieldList>
    <DottedRule />
    <DragHint>Drag fields between areas below:</DragHint>
    <Areas>
      <AreaCell left top glyph={<FilterFunnel />} label="Filters" value="SALES PERSON" />
      <AreaCell
        top
        glyph={
          <svg width="12" height="10" viewBox="0 0 12 10">
            <path d="M1 0V10M4 0V10M7 0V10M10 0V10" stroke="#8a8a8a" strokeWidth="1.3" />
          </svg>
        }
        label="Columns"
        value="YEAR"
      />
      <AreaCell
        left
        glyph={
          <svg width="12" height="9" viewBox="0 0 12 9">
            <path d="M1 1H11M1 4.5H11M1 8H11" stroke="#8a8a8a" strokeWidth="1.3" />
          </svg>
        }
        label="Rows"
        value="MONTH"
      />
      <AreaCell
        glyph={
          <svg width="11" height="10" viewBox="0 0 11 10">
            <path d="M10 2V.5H1L5 5L1 9.5H10V8" fill="none" stroke="#8a8a8a" />
          </svg>
        }
        label="Values"
        value="Sum of SALES..."
      />
    </Areas>
  </Pane>
);

const App: React.FC = () => (
  <>
    <GlobalStyle />
    <Window>
      <TitleTabs />
      <RibbonBar />
      <Formula />
      <Main>
        <Sheet />
        <FieldsPane />
      </Main>
    </Window>
  </>
);

export default App;
